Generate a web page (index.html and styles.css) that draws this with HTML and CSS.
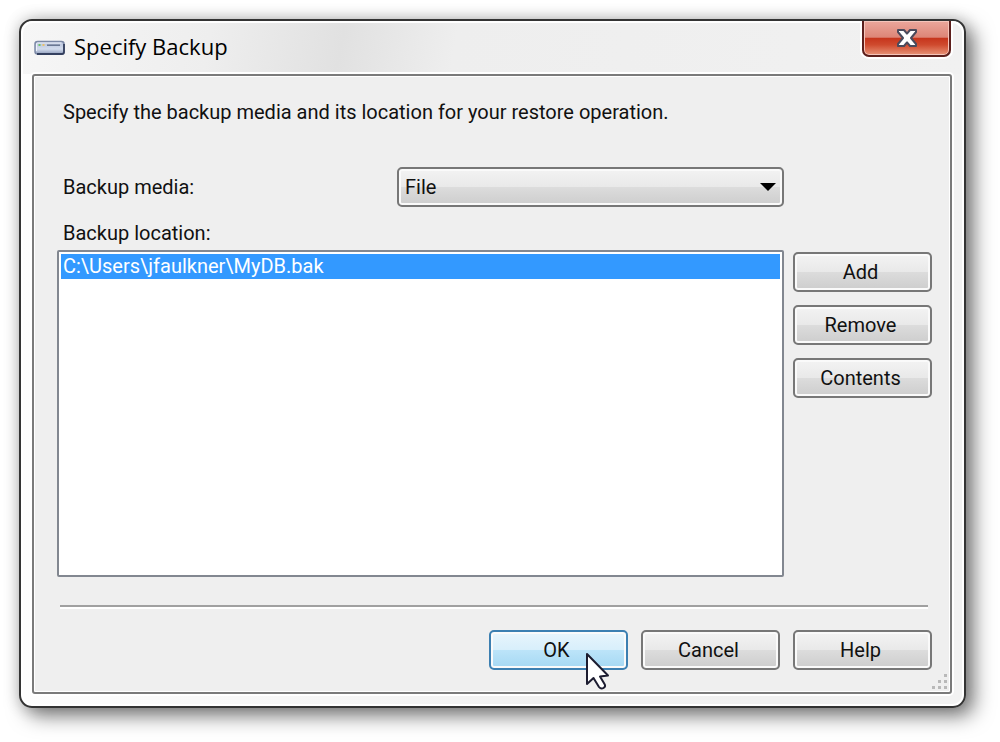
FILE: index.html
```
<!DOCTYPE html>
<html lang="en">
<head>
    <meta charset="UTF-8">
    <meta name="viewport" content="width=device-width, initial-scale=1.0">
    <title>Specify Backup</title>
    <link rel="stylesheet" href="styles.css">
</head>
<body>
    <form class="window" onsubmit="return false">
        <header class="titlebar">
            <svg class="drive-icon" width="32" height="16" viewBox="0 0 32 16" aria-hidden="true">
                <defs>
                    <linearGradient id="drive" x1="0" y1="0" x2="0" y2="1">
                        <stop offset="0" stop-color="#b4bfd8"/>
                        <stop offset="0.6" stop-color="#d3dced"/>
                        <stop offset="1" stop-color="#8f9dbb"/>
                    </linearGradient>
                </defs>
                <rect x="1" y="1.500" width="29" height="12.500" rx="2.500" fill="url(#drive)" stroke="#7c89a6" stroke-width="1.500"/>
                <path d="M3 14h25q2 0 2-2V4" fill="none" stroke="#34405f" stroke-width="1.800"/>
                <path d="M2.500 11V4q0-1 1-1h24" fill="none" stroke="#eef2fa" stroke-width="1"/>
                <rect x="4.500" y="4" width="2" height="2" fill="#6cc46c"/>
                <rect x="8.500" y="4" width="2" height="2" fill="#eac06a"/>
                <path d="M13 5.200h13" stroke="#66738f" stroke-width="1.500"/>
            </svg>
            <h1>Specify Backup</h1>
            <button type="button" class="close-btn" aria-label="Close">
                <svg width="22" height="20" viewBox="0 0 22 20" aria-hidden="true">
                    <path d="M2 2h6l3 3.600L14 2h6v2l-5 6 5 6v2h-6l-3-3.600L8 18H2v-2l5-6-5-6z" fill="#fff" stroke="#4a4a5c" stroke-width="2" stroke-linejoin="round"/>
                </svg>
            </button>
        </header>

        <main class="client">
            <p class="intro">Specify the backup media and its location for your restore operation.</p>

            <div class="media-row">
                <label for="media">Backup media:</label>
                <div class="dropdown">
                    <select id="media">
                        <option>File</option>
                    </select>
                </div>
            </div>

            <label class="location-label" for="location">Backup location:</label>
            <div class="location-row">
                <select id="location" class="listbox" size="4">
                    <option selected>C:\Users\jfaulkner\MyDB.bak</option>
                </select>
                <div class="side-buttons">
                    <button type="button" class="btn">Add</button>
                    <button type="button" class="btn">Remove</button>
                    <button type="button" class="btn">Contents</button>
                </div>
            </div>

            <hr>

            <div class="footer">
                <div class="ok-wrap">
                    <button type="submit" class="btn btn-hot">OK</button>
                    <svg class="cursor" width="26" height="40" viewBox="0 0 26 40" aria-hidden="true">
                        <path d="M2 2v30l6.500-6 5.500 9q2 2.500 4.500 1t1-4L15 24.500l8-1z" fill="#fff" stroke="#1c1c30" stroke-width="2" stroke-linejoin="round"/>
                    </svg>
                </div>
                <button type="button" class="btn">Cancel</button>
                <button type="button" class="btn">Help</button>
            </div>

            <svg class="grip" width="16" height="16" viewBox="0 0 16 16" aria-hidden="true">
                <path d="M12 0h3v3h-3zM6 6h3v3H6zM12 6h3v3h-3zM0 12h3v3H0zM6 12h3v3H6zM12 12h3v3h-3z" fill="#b9b9b9"/>
            </svg>
        </main>
    </form>
</body>
</html>
```
FILE: styles.css
```
* {
    margin: 0;
    padding: 0;
    box-sizing: border-box;
}

body {
    background: #fff;
    padding: 19px 34px 34px 19px;
    font-family: Roboto, 'Liberation Sans', sans-serif;
    font-size: 20px;
    line-height: 24px;
    color: #111;
    overflow: hidden;
}

.window {
    padding: 0 12px 12px 11px;
    border: 2px solid #333;
    border-radius: 13px;
    background: linear-gradient(90deg, #fdfdfd, #f0f0f0 60%, #f2f2f2);
    box-shadow: inset 0 0 0 2px #fff, 0 0 16px rgba(0, 0, 0, 0.2), 8px 8px 20px rgba(0, 0, 0, 0.5);
}

.titlebar {
    display: flex;
    align-items: center;
    gap: 8px;
    height: 53px;
    margin: 0 -10px 0 -9px;
    padding: 0 11px;
    border-radius: 10px 10px 0 0;
    background: linear-gradient(100deg, #f6f6f6, #eee 20%, #e1e1e1 34%, #eee 46%, #f1f1f1);
    box-shadow: inset 0 2px 0 #fff;
}

h1 {
    flex: 1;
    padding-bottom: 3px;
    font-family: 'Open Sans', 'Noto Sans', sans-serif;
    font-size: 22px;
    font-weight: 400;
    color: #000;
}

.close-btn {
    display: flex;
    align-items: center;
    justify-content: center;
    align-self: flex-start;
    width: 89px;
    height: 36px;
    border: 2px solid #5c1f1c;
    border-top: 0;
    border-radius: 0 0 7px 7px;
    background: linear-gradient(#eba79c, #dd8577 48%, #c6341c 50%, #cf4a2e 70%, #e89478);
    box-shadow: inset 0 0 0 1px #f5c5bb, 0 2px 0 #fff, -2px 1px 0 #fff, 2px 1px 0 #fff;
}

.client {
    position: relative;
    padding: 24px 18px 22px 23px;
    border: 2px solid #7a7a7a;
    border-radius: 3px;
    background: #efefef;
    box-shadow: inset 0 0 0 1px #fff, 0 0 0 2px #fff;
}

.intro {
    padding-left: 6px;
}

.media-row {
    display: flex;
    align-items: center;
    justify-content: space-between;
    margin: 43px 148px 14px 0;
    padding-left: 6px;
}

.dropdown {
    position: relative;
    width: 387px;
}

.dropdown::after {
    content: '';
    position: absolute;
    top: 16px;
    right: 8px;
    border: 8px solid transparent;
    border-top-color: #000;
    border-bottom: 0;
    pointer-events: none;
}

.dropdown select,
.btn {
    height: 40px;
    border: 2px solid #777;
    border-radius: 5px;
    background: linear-gradient(#f3f3f3, #e9e9e9 49%, #dcdcdc 51%, #cdcdcd);
    box-shadow: inset 0 0 0 2px #fafafa;
    font: inherit;
    color: #111;
}

.dropdown select {
    appearance: none;
    width: 100%;
    padding: 0 6px;
}

.location-label {
    display: block;
    padding-left: 6px;
    margin-bottom: 5px;
}

.location-row {
    display: flex;
    gap: 9px;
}

.listbox {
    flex: 1;
    height: 327px;
    padding: 2px;
    border: 2px solid #828790;
    background: #fff;
    font: inherit;
    outline: none;
    overflow: hidden;
}

.listbox option {
    height: 25px;
    padding: 0 2px;
    line-height: 25px;
}

.listbox option:checked {
    background: #39f linear-gradient(#39f, #39f);
    color: #fff;
    -webkit-text-fill-color: #fff;
}

.side-buttons {
    display: flex;
    flex-direction: column;
    gap: 13px;
    padding-top: 2px;
}

.btn {
    width: 139px;
    padding-right: 4px;
}

.btn-hot {
    border-color: #3c7fb1;
    background: linear-gradient(#e8f5fc, #d8effb 49%, #bce4f9 51%, #a5d8f3);
}

hr {
    height: 4px;
    margin: 28px 4px 21px 3px;
    border: 0;
    border-top: 2px solid #a0a0a0;
    border-bottom: 2px solid #fff;
}

.footer {
    display: flex;
    justify-content: flex-end;
    gap: 13px;
}

.ok-wrap {
    position: relative;
}

.cursor {
    position: absolute;
    top: 22px;
    left: 96px;
    pointer-events: none;
}

.grip {
    position: absolute;
    right: 2px;
    bottom: 2px;
}
```
